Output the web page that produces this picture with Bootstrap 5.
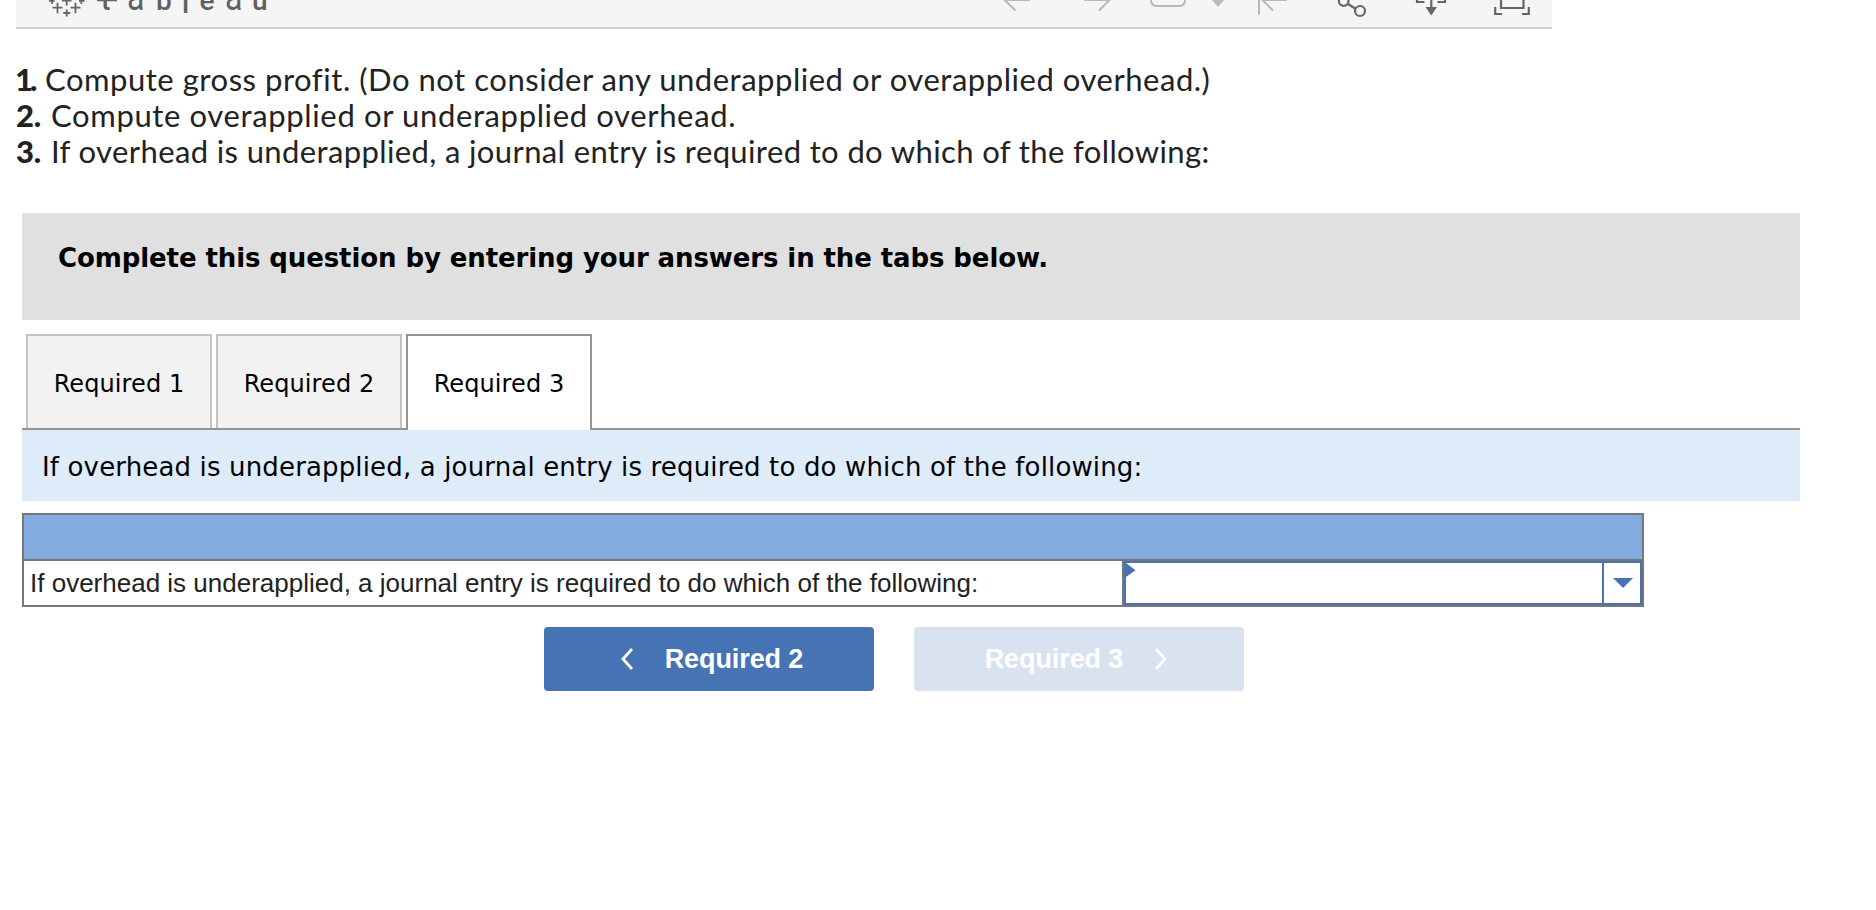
<!DOCTYPE html>
<html lang="en">
<head>
<meta charset="utf-8">
<title>Required 3</title>
<link href="https://cdn.jsdelivr.net/npm/bootstrap@5.3.0/dist/css/bootstrap.min.css" rel="stylesheet">
<style>
body{background:#fff;color:#222;font-family:"Liberation Sans",Arial,sans-serif;font-size:26px;overflow:hidden}
.toolbar-strip{width:1536px;height:29px;margin-left:16px;background:#f5f5f5;border-bottom:2px solid #d0d0d0}
.toolbar-strip svg{display:block}
.steps{margin:32px 0 0 16px;font-family:Lato,sans-serif;font-size:31px;line-height:36px;color:#222}
.steps b{flex:none;width:35px;font-weight:900;letter-spacing:-.3px}
.steps div:first-child b{width:29px;margin-left:-1px;margin-right:1px;letter-spacing:-3px}
.steps div:nth-child(1) span{letter-spacing:.53px}
.steps div:nth-child(2) span{letter-spacing:.64px}
.steps div:nth-child(3) span{letter-spacing:.38px}
.steps span,.notice span,.prompt span,.answer-label span{white-space:nowrap}
.question{width:1778px;margin-left:22px}
.notice{height:107px;margin-top:44px;padding:26px 0 0 36px;background:#e0e0e0;color:#000;font:bold 26px/38px "DejaVu Sans",sans-serif;letter-spacing:-.1px}
.question .nav-tabs{height:96px;margin-top:14px;padding-left:4px;gap:4px;border-bottom:2px solid #949494}
.question .nav-tabs .nav-link{width:186px;height:94px;margin:0;padding:0;border:2px solid #c3c3c3;border-bottom:0;border-radius:0;background:#f2f2f2;color:#000;font:24px/96px "DejaVu Sans",sans-serif;letter-spacing:.1px}
.question .nav-tabs .nav-link.active{height:96px;padding-bottom:2px;border-color:#949494;background:#fff}
.prompt{height:71px;padding-left:20px;background:#deebf8;color:#000;font:26px/74px "DejaVu Sans",sans-serif;letter-spacing:.15px}
.answer-grid{width:1622px;margin-top:12px;border:2px solid #777}
.answer-head{height:46px;background:#84abe0;border-bottom:2px solid #777}
.answer-row{height:44px}
.answer-label{width:1100px;padding-left:6px;border-right:2px solid #777;line-height:44px}
.answer-pick{border:2px solid #4673b3}
.answer-drop{width:38px;padding-left:2px;border-left:2px solid #4673b3}
.pager{width:700px;margin:20px 0 0 522px;gap:40px}
.pager .btn{gap:31px;width:330px;height:64px;padding:0 0 0 5px;border:0;border-radius:4px;background:#4673b3;color:#fff;font-size:27px;font-weight:700;letter-spacing:-.1px;opacity:1}
.pager .btn.disabled{padding:0 5px 0 0;background:#d9e3f0;color:#fff}
</style>
</head>
<body>
<header class="toolbar-strip">
<svg width="1536" height="27" viewBox="16 0 1536 27" fill="none">
  <g stroke="#666" stroke-width="1.8">
    <path d="M62 .5h9.500M66.700 0v5.500M49 .8h5.500M52 0v4M79 .8h5.500M81.300 0v4M52.500 7.700h10M57.500 2.700v10.500M70.500 7.700h10M75.500 2.700v10.500M63.300 13h7M66.700 9.500v7"/>
  </g>
  <text x="101 127 156 182 199.500 225 252" y="9.500 9.500 9.500 12.500 9.500 9.500 9.500" fill="#606060" font-family="Roboto, sans-serif" font-size="28" font-weight="500">t<tspan font-size="37" font-weight="400" textLength="17.500" lengthAdjust="spacingAndGlyphs">a</tspan>ble<tspan font-size="37" font-weight="400" textLength="17.500" lengthAdjust="spacingAndGlyphs">a</tspan>u</text>
  <path d="M97 .5h20" stroke="#666" stroke-width="1.500"/>
  <g stroke="#b8b8b8" stroke-width="2">
    <path d="M1030 0h-25.500l11 10.500M1084 0h25.500l-10.500 10.500M1259 0v14.500M1287 0h-24.500l10.500 10.500"/>
    <path d="M1151 -4v4q0 6 6 6h22q6 0 6-6v-4"/>
  </g>
  <path d="M1212 0h12l-6 7z" fill="#bbb"/>
  <g stroke="#666" stroke-width="2.200">
    <circle cx="1343.700" cy="1" r="4.800"/><circle cx="1360" cy="11" r="5"/><path d="M1348 4l8 5"/>
    <path d="M1417 0v2h7.500M1445 0v2h-7.500M1431.300 0v9"/>
    <path d="M1501 -2v10h22.500v-10M1495.200 7v7h6.800M1522 14h6.800v-7"/>
  </g>
  <path d="M1425.500 7h11.500l-5.700 8.500z" fill="#666"/>
</svg>
</header>
<main>
  <div class="steps">
    <div class="d-flex"><b>1.</b><span>Compute gross profit. (Do not consider any underapplied or overapplied overhead.)</span></div>
    <div class="d-flex"><b>2.</b><span>Compute overapplied or underapplied overhead.</span></div>
    <div class="d-flex"><b>3.</b><span>If overhead is underapplied, a journal entry is required to do which of the following:</span></div>
  </div>
  <section class="question">
    <div class="notice"><span>Complete this question by entering your answers in the tabs below.</span></div>
    <ul class="nav nav-tabs">
      <li class="nav-item"><button class="nav-link" type="button"><span>Required 1</span></button></li>
      <li class="nav-item"><button class="nav-link" type="button"><span>Required 2</span></button></li>
      <li class="nav-item"><button class="nav-link active" type="button"><span>Required 3</span></button></li>
    </ul>
    <div class="prompt"><span>If overhead is underapplied, a journal entry is required to do which of the following:</span></div>
    <div class="answer-grid">
      <div class="answer-head"></div>
      <div class="answer-row d-flex">
        <div class="answer-label flex-shrink-0"><span>If overhead is underapplied, a journal entry is required to do which of the following:</span></div>
        <div class="answer-pick d-flex flex-grow-1">
          <svg width="10" height="14" fill="#4673b3"><path d="M0 0l9.500 7.200L0 14z"/></svg>
          <div class="answer-drop d-flex align-items-center justify-content-center ms-auto">
            <svg width="20" height="10" fill="#4673b3"><path d="M0 0h20L10 10z"/></svg>
          </div>
        </div>
      </div>
    </div>
    <div class="pager d-flex">
      <button class="btn d-flex align-items-center justify-content-center" type="button"><svg width="14" height="22" fill="none" stroke="#fff" stroke-width="2.800"><path d="M12 1L3 11l9 10"/></svg><span>Required 2</span></button>
      <button class="btn disabled d-flex align-items-center justify-content-center" type="button"><span>Required 3</span><svg width="14" height="22" fill="none" stroke="#fff" stroke-width="2.800"><path d="M2 1l9 10-9 10"/></svg></button>
    </div>
  </section>
</main>
<script src="https://cdn.jsdelivr.net/npm/bootstrap@5.3.0/dist/js/bootstrap.bundle.min.js"></script>
</body>
</html>
